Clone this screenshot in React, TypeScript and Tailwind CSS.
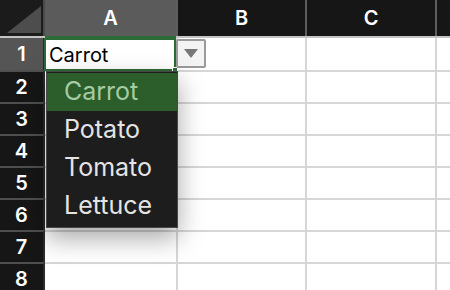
import React from 'react';

const cols = [
  { name: 'A', w: 'w-[131px]' },
  { name: 'B', w: 'w-[129px]' },
  { name: 'C', w: 'w-[130px]' },
];

const options = ['Carrot', 'Potato', 'Tomato', 'Lettuce'];

export default function App() {
  const rows = [1, 2, 3, 4, 5, 6, 7, 8];

  return (
    <div
      className="relative w-[450px] h-[290px] overflow-hidden bg-white"
      style={{ fontFamily: 'Inter, "Noto Sans", sans-serif' }}
    >
      {/* column headers */}
      <div className="flex h-[38px] border-b-2 border-[#c4c4c4]">
        <div className="w-[45px] shrink-0 bg-[#1b1b1b] border-r-2 border-[#4a4a4a] flex items-end justify-end pr-[2px] pb-[3px]">
          <svg width="34" height="27" viewBox="0 0 34 27">
            <polygon points="34,0 34,27 0,27" fill="#4d4d4d" />
          </svg>
        </div>
        {cols.map((c, i) => (
          <div
            key={c.name}
            className={`${c.w} shrink-0 flex items-center justify-center text-white text-[20px] font-semibold ${
              i === 0 ? 'bg-[#5b5b5b] border-b-2 border-[#2c6b35] -mb-[2px]' : 'bg-[#161616] border-l-2 border-[#5e5e5e]'
            }`}
          >
            {c.name}
          </div>
        ))}
        <div className="flex-1 bg-[#161616] border-l-2 border-[#5e5e5e]" />
      </div>

      {/* rows */}
      {rows.map((r) => (
        <div key={r} className="flex h-[32px]">
          <div
            className={`w-[45px] shrink-0 flex items-center justify-center text-white text-[20px] font-semibold border-r-2 border-[#2a2a2a] ${
              r === 1 ? 'bg-[#555555]' : 'bg-[#161616] border-t-2 border-t-[#4f4f4f]'
            }`}
          >
            {r}
          </div>
          {cols.map((c, i) => (
            <div
              key={c.name}
              className={`${c.w} shrink-0 ${i > 0 ? 'border-l-2' : ''} ${r > 1 ? 'border-t-2' : ''} border-[#d6d6d6]`}
            />
          ))}
          <div className={`flex-1 border-l-2 ${r > 1 ? 'border-t-2' : ''} border-[#d6d6d6]`} />
        </div>
      ))}

      {/* selected cell A1 */}
      <div className="absolute left-[44px] top-[38px] w-[132px] h-[33px] border-2 border-[#2c6b35] bg-white flex items-center pl-[3px] text-[20px] text-black">
        Carrot
        <div className="absolute -right-[4px] -bottom-[4px] w-[6px] h-[6px] bg-[#2c6b35] border border-white" />
      </div>

      {/* dropdown button */}
      <div className="absolute left-[176px] top-[39px] w-[30px] h-[29px] bg-[#f3f3f3] border-2 border-[#9a9a9a] rounded-[2px] flex items-center justify-center">
        <svg width="14" height="9" viewBox="0 0 14 9">
          <polygon points="0,0 14,0 7,9" fill="#777777" />
        </svg>
      </div>

      {/* dropdown list */}
      <div className="absolute left-[46px] top-[71px] w-[132px] h-[157px] bg-[#1d1d1d] border border-[#474747] pt-[1px] shadow-[0_10px_24px_rgba(0,0,0,0.35)]">
        {options.map((o, i) => (
          <div
            key={o}
            className={`h-[38px] flex items-center pl-[17px] text-[25px] ${
              i === 0 ? 'bg-[#2b5e2b] text-[#a6cba3]' : 'text-[#e4e4e4]'
            }`}
          >
            {o}
          </div>
        ))}
      </div>
    </div>
  );
}
